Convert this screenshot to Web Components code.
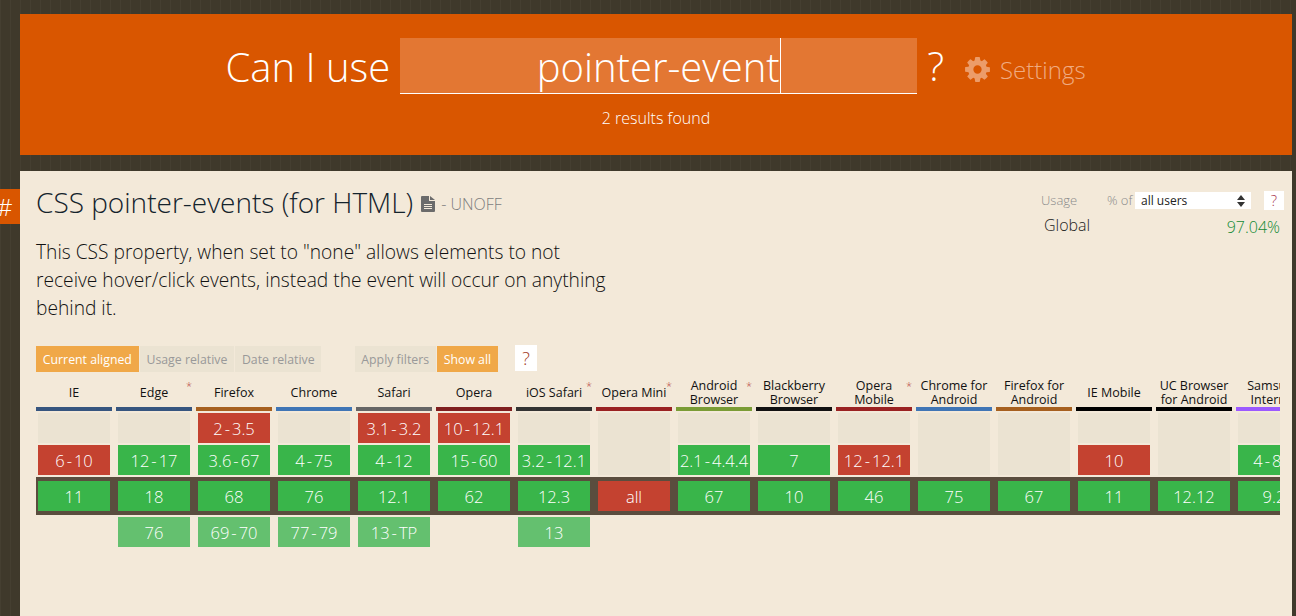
<!DOCTYPE html>
<html lang="en">
<head>
<meta charset="utf-8">
<title>Can I use</title>
<style>
  html, body { margin: 0; height: 616px; overflow: hidden; }
  body {
    padding: 14px 4px 0 20px;
    box-sizing: border-box;
    font-family: "Open Sans", "Liberation Sans", sans-serif;
    background-color: #3f392b;
    background-image: repeating-linear-gradient(90deg, #453f31 0 1px, transparent 1px 10px);
  }
</style>
</head>
<body>
  <ciu-search query="pointer-event" results="2 results found"></ciu-search>
  <ciu-feature>
    <span slot="title">CSS pointer-events (for HTML)</span>
    <span slot="status">- UNOFF</span>
    <ciu-usage slot="usage" scope="all users" region="Global" value="97.04%"></ciu-usage>
    This CSS property, when set to "none" allows elements to not receive hover/click events, instead the event will occur on anything behind it.
    <ciu-filters slot="filters">
      <ciu-btn on>Current aligned</ciu-btn>
      <ciu-btn>Usage relative</ciu-btn>
      <ciu-btn>Date relative</ciu-btn>
      <ciu-btn slot="second">Apply filters</ciu-btn>
      <ciu-btn slot="second" on>Show all</ciu-btn>
    </ciu-filters>
    <ciu-table slot="table">
      <ciu-browser bar="#36557f">IE
        <ciu-cell slot="past"></ciu-cell><ciu-cell slot="past" type="n">6<b>-</b>10</ciu-cell>
        <ciu-cell slot="current" type="y">11</ciu-cell>
      </ciu-browser>
      <ciu-browser bar="#36557f" star>Edge
        <ciu-cell slot="past"></ciu-cell><ciu-cell slot="past" type="y">12<b>-</b>17</ciu-cell>
        <ciu-cell slot="current" type="y">18</ciu-cell>
        <ciu-cell slot="future" type="f">76</ciu-cell>
      </ciu-browser>
      <ciu-browser bar="#a6601f">Firefox
        <ciu-cell slot="past" type="n">2<b>-</b>3.5</ciu-cell><ciu-cell slot="past" type="y">3.6<b>-</b>67</ciu-cell>
        <ciu-cell slot="current" type="y">68</ciu-cell>
        <ciu-cell slot="future" type="f">69<b>-</b>70</ciu-cell>
      </ciu-browser>
      <ciu-browser bar="#3f75b5">Chrome
        <ciu-cell slot="past"></ciu-cell><ciu-cell slot="past" type="y">4<b>-</b>75</ciu-cell>
        <ciu-cell slot="current" type="y">76</ciu-cell>
        <ciu-cell slot="future" type="f">77<b>-</b>79</ciu-cell>
      </ciu-browser>
      <ciu-browser bar="#666666">Safari
        <ciu-cell slot="past" type="n">3.1<b>-</b>3.2</ciu-cell><ciu-cell slot="past" type="y">4<b>-</b>12</ciu-cell>
        <ciu-cell slot="current" type="y">12.1</ciu-cell>
        <ciu-cell slot="future" type="f">13<b>-</b>TP</ciu-cell>
      </ciu-browser>
      <ciu-browser bar="#7f1f1f">Opera
        <ciu-cell slot="past" type="n">10<b>-</b>12.1</ciu-cell><ciu-cell slot="past" type="y">15<b>-</b>60</ciu-cell>
        <ciu-cell slot="current" type="y">62</ciu-cell>
      </ciu-browser>
      <ciu-browser bar="#333333" star>iOS Safari
        <ciu-cell slot="past"></ciu-cell><ciu-cell slot="past" type="y">3.2<b>-</b>12.1</ciu-cell>
        <ciu-cell slot="current" type="y">12.3</ciu-cell>
        <ciu-cell slot="future" type="f">13</ciu-cell>
      </ciu-browser>
      <ciu-browser bar="#9a2222" star>Opera Mini
        <ciu-cell slot="past"></ciu-cell>
        <ciu-cell slot="current" type="n">all</ciu-cell>
      </ciu-browser>
      <ciu-browser bar="#7a9c35" star>Android<br>Browser
        <ciu-cell slot="past"></ciu-cell><ciu-cell slot="past" type="y">2.1<b>-</b>4.4.4</ciu-cell>
        <ciu-cell slot="current" type="y">67</ciu-cell>
      </ciu-browser>
      <ciu-browser bar="#111111">Blackberry<br>Browser
        <ciu-cell slot="past"></ciu-cell><ciu-cell slot="past" type="y">7</ciu-cell>
        <ciu-cell slot="current" type="y">10</ciu-cell>
      </ciu-browser>
      <ciu-browser bar="#9a2222" star>Opera<br>Mobile
        <ciu-cell slot="past"></ciu-cell><ciu-cell slot="past" type="n">12<b>-</b>12.1</ciu-cell>
        <ciu-cell slot="current" type="y">46</ciu-cell>
      </ciu-browser>
      <ciu-browser bar="#3f75b5">Chrome for<br>Android
        <ciu-cell slot="past"></ciu-cell>
        <ciu-cell slot="current" type="y">75</ciu-cell>
      </ciu-browser>
      <ciu-browser bar="#a6601f">Firefox for<br>Android
        <ciu-cell slot="past"></ciu-cell>
        <ciu-cell slot="current" type="y">67</ciu-cell>
      </ciu-browser>
      <ciu-browser bar="#000000">IE Mobile
        <ciu-cell slot="past"></ciu-cell><ciu-cell slot="past" type="n">10</ciu-cell>
        <ciu-cell slot="current" type="y">11</ciu-cell>
      </ciu-browser>
      <ciu-browser bar="#000000">UC Browser<br>for Android
        <ciu-cell slot="past"></ciu-cell>
        <ciu-cell slot="current" type="y">12.12</ciu-cell>
      </ciu-browser>
      <ciu-browser bar="#9b59ff">Samsung<br>Internet
        <ciu-cell slot="past"></ciu-cell><ciu-cell slot="past" type="y">4<b>-</b>8.2</ciu-cell>
        <ciu-cell slot="current" type="y">9.2</ciu-cell>
      </ciu-browser>
    </ciu-table>
  </ciu-feature>

<script>
// orange search band at the top of the page
class CiuSearch extends HTMLElement {
  connectedCallback() {
    const query = this.getAttribute('query') || '';
    const results = this.getAttribute('results') || '';
    this.attachShadow({ mode: 'open' }).innerHTML = `
      <style>
        :host { display: block; height: 141px; background: #d95600; color: #fff; padding-top: 24px; box-sizing: border-box; }
        .row { display: flex; justify-content: center; align-items: center; height: 56px; font-weight: 300; font-size: 40px; }
        .box {
          width: 517px; height: 56px; box-sizing: border-box; margin: 0 11px 0 10px;
          background: #e37733; border-bottom: 1px solid #fff;
          display: flex; justify-content: center;
        }
        .box span { line-height: 58px; border-right: 1px solid #fff; }
        .settings { display: flex; align-items: center; margin: 6px 1px 0 21px; font-size: 24px; color: #f0ab80; gap: 10px; }
        svg { width: 29px; height: 29px; fill: #ec9c69; margin: 0 -2px; }
        .q { margin: -2px 0 0 -1px; }
        p { margin: 12px 0 0; text-align: center; font-size: 16px; line-height: 24px; font-weight: 300; }
      </style>
      <div class="row">
        <span>Can I use</span>
        <div class="box"><span>${query}</span></div>
        <span class="q">?</span>
        <div class="settings">
          <svg viewBox="0 0 1792 1792"><path d="M1152 896q0-106-75-181t-181-75-181 75-75 181 75 181 181 75 181-75 75-181zm512-109v222q0 12-8 23t-20 13l-185 28q-19 54-39 91 35 50 107 138 10 12 10 25t-9 23q-27 37-99 108t-94 71q-12 0-26-9l-138-108q-44 23-91 38-16 136-29 186-7 28-36 28h-222q-14 0-24.5-8.5t-11.5-21.5l-28-184q-49-16-90-37l-141 107q-10 9-25 9-14 0-25-11-126-114-165-168-7-10-7-23 0-12 8-23 15-21 51-66.5t54-70.5q-27-50-41-99l-183-27q-13-2-21-12.5t-8-23.5v-222q0-12 8-23t19-13l186-28q14-46 39-92-40-57-107-138-10-12-10-24 0-10 9-23 26-36 98.5-107.5t94.5-71.5q13 0 26 10l138 107q44-23 91-38 16-136 29-186 7-28 36-28h222q14 0 24.5 8.5t11.5 21.5l28 184q49 16 90 37l142-107q9-9 24-9 13 0 25 10 129 119 165 170 7 8 7 22 0 12-8 23-15 21-51 66.5t-54 70.5q26 50 41 98l183 28q13 2 21 12.5t8 23.5z"/></svg>
          <span>Settings</span>
        </div>
      </div>
      <p>${results}</p>`;
  }
}
customElements.define('ciu-search', CiuSearch);

// cream card with the feature title, description, filters and table
class CiuFeature extends HTMLElement {
  connectedCallback() {
    this.attachShadow({ mode: 'open' }).innerHTML = `
      <style>
        :host { display: block; position: relative; margin-top: 16px; height: 445px; background: #f3e9d9; padding: 13px 12px 0 16px; box-sizing: border-box; color: #111; font-weight: 300; }
        .anchor { position: absolute; left: -20px; top: 18px; width: 20px; height: 35px; background: #d95600; color: #fff; font-size: 24px; line-height: 35px; overflow: hidden; text-indent: -3px; font-weight: 300; }
        .top { display: flex; justify-content: space-between; height: 162px; }
        h1 { margin: 0; font-size: 28px; font-weight: 300; line-height: 32px; color: #14232c; display: flex; align-items: center; }
        .file { width: 14px; height: 16px; margin: 3px 6px 0 8px; fill: #6b6b6b; }
        .status { font-size: 16px; color: #7d7d7d; margin-top: 4px; }
        .desc { margin-top: 18px; width: 580px; font-size: 19.2px; line-height: 28px; }
      </style>
      <div class="anchor">#</div>
      <div class="top">
        <div>
          <h1><slot name="title"></slot>
            <svg class="file" viewBox="0 0 14 16"><path fill-rule="evenodd" d="M1 0h7v4.5a.5.5 0 0 0 .5.5H14v10a1 1 0 0 1-1 1H1a1 1 0 0 1-1-1V1a1 1 0 0 1 1-1zM9 0l5 4H9zM3 8v1h8V8zm0 2v1h8v-1zm0 2v1h8v-1z"/></svg>
            <span class="status"><slot name="status"></slot></span></h1>
          <div class="desc"><slot></slot></div>
        </div>
        <slot name="usage"></slot>
      </div>
      <slot name="filters"></slot>
      <slot name="table"></slot>`;
  }
}
customElements.define('ciu-feature', CiuFeature);

// global usage box, top right of the card
class CiuUsage extends HTMLElement {
  connectedCallback() {
    const scope = this.getAttribute('scope');
    const region = this.getAttribute('region');
    const value = this.getAttribute('value');
    this.attachShadow({ mode: 'open' }).innerHTML = `
      <style>
        :host { display: block; flex: none; width: 243px; margin-right: -4px; font-size: 13px; color: #8a8a8a; font-weight: 300; }
        .head { display: flex; align-items: center; height: 19px; margin-top: 7px; white-space: nowrap; }
        .usage { flex: none; width: 66px; margin-top: -2px; }
        .of { flex: none; width: 25px; margin-top: -1px; }
        .sel { flex: none; width: 116px; height: 17px; margin: 0 13px 0 3px; background: #fff; color: #222; display: flex; justify-content: space-between; align-items: center; padding: 0 6px; box-sizing: border-box; font-size: 12px; font-weight: 400; }
        .sel svg { width: 8px; height: 12px; fill: #333; }
        .help { flex: none; width: 20px; height: 19px; background: #fff; color: #a8324a; text-align: center; line-height: 19px; font-size: 15px; font-weight: 300; }
        .row { display: flex; justify-content: space-between; padding: 3px 4px 0 3px; }
        .region { font-size: 16px; color: #222; line-height: 24px; }
        .value { font-size: 16px; color: #128a35; line-height: 26px; margin-top: 1px; }
      </style>
      <div class="head">
        <span class="usage">Usage</span><span class="of">% of</span>
        <div class="sel"><span>${scope}</span>
          <svg viewBox="0 0 8 12"><path d="M4 0l4 5H0zM0 7h8l-4 5z"/></svg></div>
        <div class="help">?</div>
      </div>
      <div class="row"><span class="region">${region}</span><span class="value">${value}</span></div>`;
  }
}
customElements.define('ciu-usage', CiuUsage);

// filter button row
class CiuFilters extends HTMLElement {
  connectedCallback() {
    this.attachShadow({ mode: 'open' }).innerHTML = `
      <style>
        :host { display: flex; align-items: flex-start; height: 32px; }
        .group { display: flex; gap: 1px; }
        .group + .group { margin-left: 33.2px; }
        .help { width: 22px; height: 26px; margin: -1px 0 0 17px; background: #fff; color: #a33a1e; text-align: center; line-height: 26px; font-size: 18px; font-weight: 300; }
      </style>
      <div class="group"><slot></slot></div>
      <div class="group"><slot name="second"></slot></div>
      <div class="help">?</div>`;
  }
}
customElements.define('ciu-filters', CiuFilters);

class CiuBtn extends HTMLElement {
  connectedCallback() {
    this.attachShadow({ mode: 'open' }).innerHTML = `
      <style>
        :host { display: block; height: 26px; padding: 0 6.8px; background: #ebe3d2; color: #999; font-size: 12.3px; line-height: 27px; font-weight: 400; }
        :host([on]) { background: #f0a848; color: #fff; }
      </style>
      <slot></slot>`;
  }
}
customElements.define('ciu-btn', CiuBtn);

// support table: one flex row of browser columns, cut at the card's padding
class CiuTable extends HTMLElement {
  connectedCallback() {
    this.attachShadow({ mode: 'open' }).innerHTML = `
      <style>
        :host { display: flex; overflow: hidden; }
      </style>
      <slot></slot>`;
  }
}
customElements.define('ciu-table', CiuTable);

class CiuBrowser extends HTMLElement {
  connectedCallback() {
    const bar = this.getAttribute('bar');
    this.attachShadow({ mode: 'open' }).innerHTML = `
      <style>
        :host { display: block; flex: 0 0 80px; width: 80px; }
        .name { position: relative; height: 29px; margin-right: 4px; display: flex; align-items: center; justify-content: center; text-align: center; font-size: 12.5px; line-height: 14px; font-weight: 400; color: #111; white-space: nowrap; border-bottom: 4px solid ${bar}; }
        .star { display: none; position: absolute; right: 0; top: 2px; color: #b5453a; font-size: 11px; line-height: 12px; font-weight: 300; }
        :host([star]) .star { display: block; }
        .past { display: flex; flex-direction: column; gap: 2px; height: 62px; margin: 2px 0; }
        .current { background: #5a4d3e; padding: 4px 0; }
        .future { display: block; margin-top: 2px; }
      </style>
      <div class="name"><span><slot></slot></span><span class="star">*</span></div>
      <div class="past"><slot name="past"></slot></div>
      <div class="current"><slot name="current"></slot></div>
      <div class="future"><slot name="future"></slot></div>`;
  }
}
customElements.define('ciu-browser', CiuBrowser);

class CiuCell extends HTMLElement {
  connectedCallback() {
    this.attachShadow({ mode: 'open' }).innerHTML = `
      <style>
        :host { display: block; flex: 1; height: 30px; margin: 0 6px 0 2px; background: #ebe3d2; color: #fff; text-align: center; font-size: 16.5px; line-height: 32px; font-weight: 300; white-space: nowrap; overflow: hidden; }
        :host([slot="past"]) { height: auto; }
        :host([type="y"]) { background: #39b54a; }
        :host([type="n"]) { background: #c44230; }
        :host([type="f"]) { background: #64c06f; }
        ::slotted(b) { font-weight: inherit; margin: 0 2px; }
      </style>
      <slot></slot>`;
  }
}
customElements.define('ciu-cell', CiuCell);
</script>
</body>
</html>
